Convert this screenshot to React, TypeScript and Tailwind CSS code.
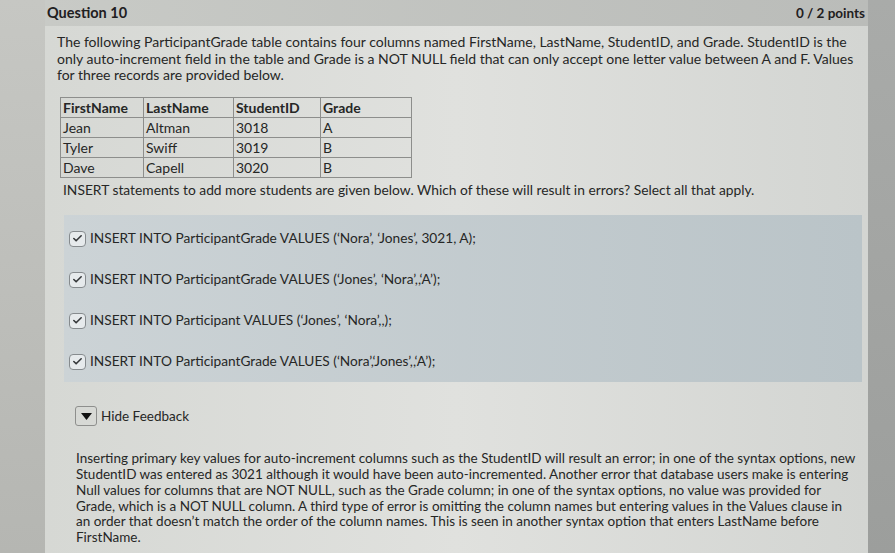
import { Check } from "lucide-react";

const font = { fontFamily: "Lato, 'Open Sans', sans-serif" };

const rows = [
  ["Jean", "Altman", "3018", "A"],
  ["Tyler", "Swiff", "3019", "B"],
  ["Dave", "Capell", "3020", "B"],
];

const options = [
  "INSERT INTO ParticipantGrade VALUES (‘Nora’, ‘Jones’, 3021, A);",
  "INSERT INTO ParticipantGrade VALUES (‘Jones’, ‘Nora’,,‘A’);",
  "INSERT INTO Participant VALUES (‘Jones’, ‘Nora’,,);",
  "INSERT INTO ParticipantGrade VALUES (‘Nora’,‘Jones’,,‘A’);",
];

export default function App() {
  const cell = "border border-[#8d8e8c] px-[2px] text-left font-normal leading-[19px]";

  return (
    <div
      className="flex h-[553px] w-[895px] overflow-hidden bg-gradient-to-b from-[#c6c7c3] to-[#b5b6b2] text-[#262726]"
      style={font}
    >
      <div className="w-[45px] shrink-0" />

      {/* Question card */}
      <div className="flex w-[823px] shrink-0 flex-col bg-gradient-to-r from-[#d6d8d4] via-[#e0e1de] to-[#d3d5d2]">
        <div className="flex h-[26px] items-center justify-between bg-gradient-to-r from-[#c8cac6] to-[#babcb9] pl-[2px] pr-[3px] font-bold text-[#1f201f]">
          <span className="text-[14.5px]">Question 10</span>
          <span className="text-[13.5px]">0 / 2 points</span>
        </div>

        <p className="ml-[12px] mt-[8px] text-[14px] leading-[16.5px]">
          The following ParticipantGrade table contains four columns named FirstName, LastName, StudentID, and Grade. StudentID is the
          <br />
          only auto-increment field in the table and Grade is a NOT NULL field that can only accept one letter value between A and F. Values
          <br />
          for three records are provided below.
        </p>

        <table className="ml-[15px] mt-[13px] w-[352px] border-collapse text-[14px]">
          <thead>
            <tr>
              <th className={`${cell} w-[83px] !font-bold`}>FirstName</th>
              <th className={`${cell} w-[90px] !font-bold`}>LastName</th>
              <th className={`${cell} w-[87px] !font-bold`}>StudentID</th>
              <th className={`${cell} !font-bold`}>Grade</th>
            </tr>
          </thead>
          <tbody>
            {rows.map((r) => (
              <tr key={r[0]}>
                {r.map((v, i) => (
                  <td key={i} className={cell}>
                    {v}
                  </td>
                ))}
              </tr>
            ))}
          </tbody>
        </table>

        <p className="ml-[18px] mt-[4px] text-[13.8px] leading-[16.5px]">
          INSERT statements to add more students are given below. Which of these will result in errors? Select all that apply.
        </p>

        {/* Answer options */}
        <div className="ml-[19px] mr-[6px] mt-[17px] flex flex-col bg-gradient-to-r from-[#ccd3d6] to-[#bac4c8] pt-[3px]">
          {options.map((o, i) => (
            <label key={i} className="flex h-[41px] items-center gap-[4px] pl-[5px] text-[13.7px]">
              <span className="flex h-[16px] w-[17px] items-center justify-center rounded-[4px] border border-[#868b8e] bg-[#e6eaec]">
                <Check size={11} strokeWidth={3.5} className="text-[#35383a]" />
              </span>
              <span>{o}</span>
            </label>
          ))}
        </div>

        {/* Feedback */}
        <div className="ml-[30px] mt-[24px] flex items-center gap-[4px]">
          <span className="flex h-[20px] w-[22px] items-center justify-center rounded-[3px] border border-[#8e8f8d]">
            <svg width="11" height="7" viewBox="0 0 11 7">
              <path d="M0 0 L11 0 L5.5 7 Z" fill="#111" />
            </svg>
          </span>
          <span className="text-[13.5px]">Hide Feedback</span>
        </div>

        <p className="ml-[31px] mt-[25px] text-[13.5px] leading-[15.8px]">
          Inserting primary key values for auto-increment columns such as the StudentID will result an error; in one of the syntax options, new
          <br />
          StudentID was entered as 3021 although it would have been auto-incremented. Another error that database users make is entering
          <br />
          Null values for columns that are NOT NULL, such as the Grade column; in one of the syntax options, no value was provided for
          <br />
          Grade, which is a NOT NULL column. A third type of error is omitting the column names but entering values in the Values clause in
          <br />
          an order that doesn’t match the order of the column names. This is seen in another syntax option that enters LastName before
          <br />
          FirstName.
        </p>
      </div>

      <div className="flex-1 bg-gradient-to-b from-[#a9aba9] to-[#9c9e9c]" />
    </div>
  );
}
